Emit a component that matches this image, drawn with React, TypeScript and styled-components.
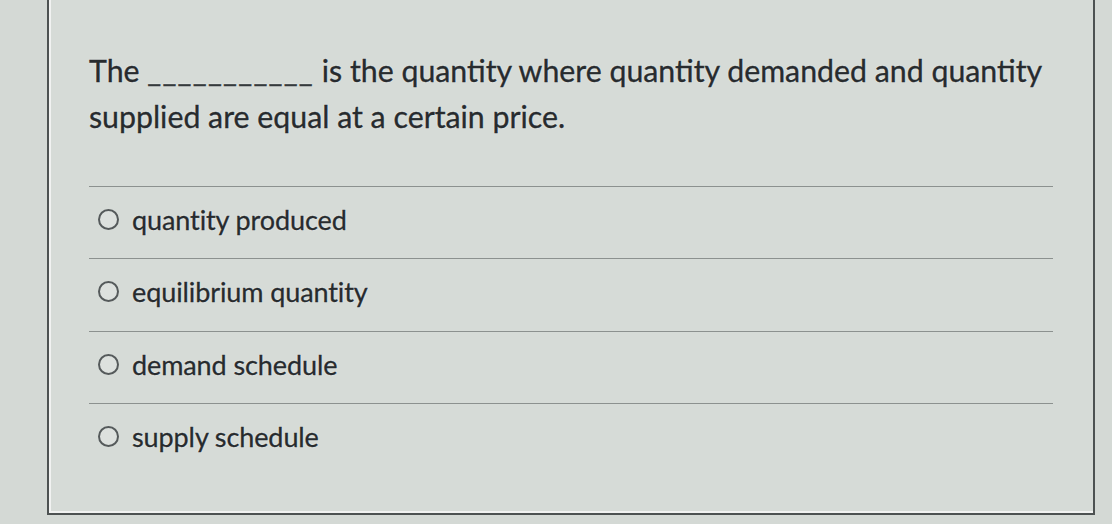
import React from "react";
import styled, { createGlobalStyle } from "styled-components";

const GlobalStyle = createGlobalStyle`
  html, body {
    margin: 0;
    padding: 0;
    background: #d4d9d5;
  }
  body {
    font-family: Lato, "Noto Sans", sans-serif;
    color: #272b2e;
  }
`;

const options = [
  "quantity produced",
  "equilibrium quantity",
  "demand schedule",
  "supply schedule",
];

const Page = styled.div`
  width: 1112px;
  height: 524px;
  padding: 0 17px 9px 47px;
  box-sizing: border-box;
  display: flex;
`;

const Panel = styled.div`
  flex: 1;
  display: flex;
  flex-direction: column;
  padding: 0 40px;
  border: 2px solid #4d5252;
  border-top: none;
  box-shadow: inset 2px -2px 0 rgba(255, 255, 255, 0.65);
  background: #d6dbd7;
`;

const Question = styled.p`
  margin: 0;
  padding-top: 47px;
  font-size: 30.3px;
  line-height: 46px;
  -webkit-text-stroke: 0.35px #272b2e;
  text-shadow: 0 0 2px rgba(255, 255, 255, 0.7);
`;

const Blank = styled.span`
  letter-spacing: 1.25px;
  color: #3a3f41;
`;

const OptionList = styled.div`
  margin-top: 47px;
  display: flex;
  flex-direction: column;
`;

const Option = styled.label`
  display: flex;
  align-items: center;
  gap: 13px;
  height: 72.3px;
  padding: 0 0 6px 9px;
  box-sizing: border-box;
  border-top: 1px solid #8c918f;
  font-size: 27px;
  letter-spacing: -0.1px;
  -webkit-text-stroke: 0.3px #272b2e;
  text-shadow: 0 0 2px rgba(255, 255, 255, 0.7);
  cursor: pointer;
`;

const Radio = styled.span`
  width: 17px;
  height: 17px;
  border: 2px solid #555a5b;
  border-radius: 50%;
  background: #dde1de;
  flex-shrink: 0;
`;

export default function App() {
  return (
    <>
      <GlobalStyle />
      <Page>
        <Panel>
          <Question>
            The <Blank>___________</Blank> is the quantity where quantity
            demanded and quantity supplied are equal at a certain price.
          </Question>
          <OptionList>
            {options.map((o) => (
              <Option key={o}>
                <Radio />
                {o}
              </Option>
            ))}
          </OptionList>
        </Panel>
      </Page>
    </>
  );
}
